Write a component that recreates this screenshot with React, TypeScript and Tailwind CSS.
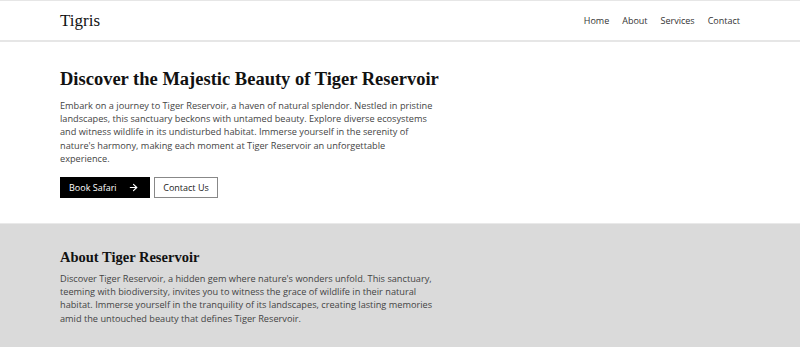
import React from 'react';

const Header = () => (
  <header className="flex items-center justify-between h-[42px] border-t border-b-2 border-[#e6e6e6] bg-white px-[60px]">
    <div className="font-['Liberation_Serif',serif] text-[17px] text-[#111]">Tigris</div>
    <nav className="flex gap-[13px] font-['Open_Sans',sans-serif] text-[9px] text-[#333]">
      <a>Home</a>
      <a>About</a>
      <a>Services</a>
      <a>Contact</a>
    </nav>
  </header>
);

export default function App() {
  return (
    <div className="w-[800px] h-[347px] overflow-hidden bg-white font-['Open_Sans',sans-serif]">
      <Header />

      <section className="px-[60px] pt-[24px] h-[181px]">
        <h1 className="font-['Liberation_Serif',serif] text-[18.5px] leading-[26px] font-bold text-[#111]">
          Discover the Majestic Beauty of Tiger Reservoir
        </h1>
        <p className="mt-[7px] max-w-[374px] text-[9.2px] leading-[13.2px] text-[#444]">
          Embark on a journey to Tiger Reservoir, a haven of natural splendor. Nestled in pristine landscapes, this sanctuary beckons with untamed beauty. Explore diverse ecosystems and witness wildlife in its undisturbed habitat. Immerse yourself in the serenity of nature's harmony, making each moment at Tiger Reservoir an unforgettable experience.
        </p>
        <div className="mt-[12px] flex gap-[4px]">
          <button className="flex items-center justify-between w-[90px] h-[21px] bg-black text-white text-[9px] pl-[9px] pr-[11px]">
            Book Safari
            <svg width="11" height="11" viewBox="0 0 24 24" fill="none" stroke="currentColor" strokeWidth="2.5" strokeLinecap="round" strokeLinejoin="round">
              <path d="M5 12h14" />
              <path d="M12 5l7 7-7 7" />
            </svg>
          </button>
          <button className="h-[21px] w-[64px] border border-[#888] text-[#222] text-[9px]">
            Contact Us
          </button>
        </div>
      </section>

      <section className="bg-[#dadada] border-t border-[#e9e9e9] px-[60px] pt-[24px] h-[124px]">
        <h2 className="font-['Liberation_Serif',serif] text-[14.5px] leading-[18px] font-bold text-[#111]">
          About Tiger Reservoir
        </h2>
        <p className="mt-[6px] max-w-[374px] text-[9.2px] leading-[13.2px] text-[#444]">
          Discover Tiger Reservoir, a hidden gem where nature's wonders unfold. This sanctuary, teeming with biodiversity, invites you to witness the grace of wildlife in their natural habitat. Immerse yourself in the tranquility of its landscapes, creating lasting memories amid the untouched beauty that defines Tiger Reservoir.
        </p>
      </section>
    </div>
  );
}
